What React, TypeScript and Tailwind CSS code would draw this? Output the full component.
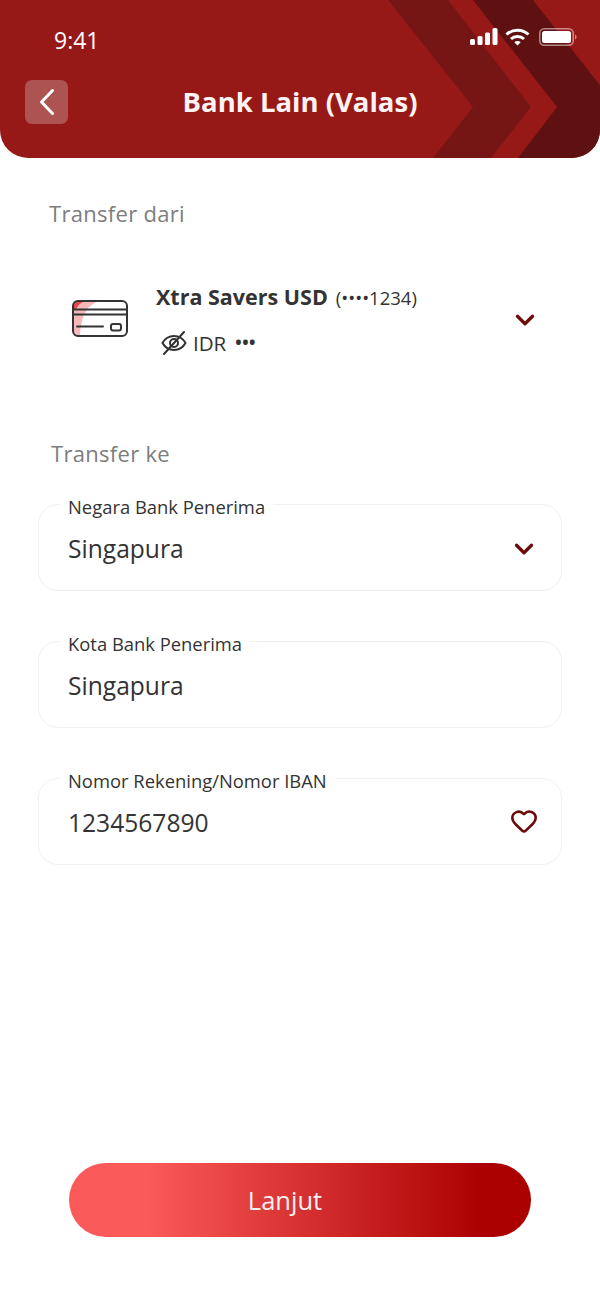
import React from 'react';
import { ChevronDown, Heart } from 'lucide-react';

const font = { fontFamily: '"Open Sans", sans-serif' };

const Chevrons = () => (
  <svg className="absolute inset-0" width="600" height="158" viewBox="0 0 600 158" fill="none">
    <path d="M388 0H448L531 107L491 158H433L473 107Z" fill="#761614" />
    <path d="M473 0H533L617 107L600 158H518L557 107Z" fill="#5e1110" />
  </svg>
);

const StatusIcons = () => (
  <div className="flex items-center">
    <svg width="28" height="18" viewBox="0 0 28 18" fill="white">
      <rect x="0" y="11" width="5" height="6" rx="1.5" />
      <rect x="7.5" y="8" width="5" height="9" rx="1.5" />
      <rect x="15" y="4.5" width="5" height="12.5" rx="1.5" />
      <rect x="22.5" y="0" width="5" height="17" rx="1.5" />
    </svg>
    <svg width="25" height="18" viewBox="0 0 25 18" fill="none" stroke="white" strokeWidth="3" className="ml-[7px]">
      <path d="M1.5 6.5C7.5 0.8 17.5 0.8 23.5 6.5" />
      <path d="M6 11C9.5 7.6 15.5 7.6 19 11" />
      <path d="M12.5 17.5L9.3 14.2C11 12.7 14 12.7 15.7 14.2Z" fill="white" stroke="none" />
    </svg>
    <svg width="38" height="20" viewBox="0 0 38 20" fill="none" className="ml-[9px]">
      <rect x="0.75" y="1.75" width="33.5" height="16.5" rx="4.5" stroke="white" strokeOpacity="0.5" strokeWidth="1.5" />
      <rect x="3" y="4" width="29" height="12" rx="2.5" fill="white" />
      <path d="M36 7.5C37 8 37.5 9 37.5 10C37.5 11 37 12 36 12.5Z" fill="white" fillOpacity="0.5" />
    </svg>
  </div>
);

const CardIcon = () => (
  <svg width="56" height="37" viewBox="0 0 56 37" fill="none">
    <path d="M2 8C2 3 3 1 8 1H28C15 4 9 16 8 36H6C3 36 2 35 2 32Z" fill="#f6b9b9" />
    <path d="M2 10V5C2 3 3 1 6 1H13C8 3 5 6 4 10Z" fill="#e8494c" />
    <rect x="1" y="1" width="54" height="35" rx="5" stroke="#333333" strokeWidth="2" />
    <path d="M1 9.5H55M1 14.5H55" stroke="#333333" strokeWidth="2" />
    <path d="M5 26.5H31" stroke="#333333" strokeWidth="2" strokeLinecap="round" />
    <rect x="39" y="24" width="10" height="6.5" rx="2" stroke="#333333" strokeWidth="2" />
  </svg>
);

const EyeOff = () => (
  <svg width="26" height="24" viewBox="0 0 26 24" fill="none" stroke="#333333" strokeWidth="2">
    <path d="M1.5 12C4 7.5 8 5 13 5C18 5 22 7.5 24.5 12C22 16.5 18 19 13 19C8 19 4 16.5 1.5 12Z" />
    <circle cx="13" cy="12" r="4" />
    <path d="M3 23L23 1" strokeLinecap="round" />
  </svg>
);

interface FieldProps {
  label: string;
  value: string;
  icon?: React.ReactNode;
}

const Field: React.FC<FieldProps> = ({ label, value, icon }) => (
  <div className="relative flex h-[87px] items-center justify-between rounded-[20px] border border-[#f1f1f1] pl-[29px] pr-[22px] pt-[3px]">
    <span className="absolute -top-[10px] left-[21px] bg-white px-2 text-[18.4px] leading-[24px] text-[#333333]">
      {label}
    </span>
    <span className="text-[24.6px] leading-[32px] text-[#333333]">{value}</span>
    {icon}
  </div>
);

export default function App() {
  return (
    <div className="flex h-[1300px] w-[600px] flex-col bg-white" style={font}>
      <header className="relative h-[158px] shrink-0 overflow-hidden rounded-b-[28px] bg-[#971917]">
        <Chevrons />
        <div className="relative flex h-[80px] items-start justify-between pl-[54px] pr-[23px] pt-[25px]">
          <span className="text-[23px] leading-[30px] text-white">9:41</span>
          <div className="pt-[2px]">
            <StatusIcons />
          </div>
        </div>
        <div className="relative flex h-[44px] items-center justify-center">
          <button className="absolute left-[25px] top-0 flex h-[44px] w-[43px] items-center justify-center rounded-[7px] bg-[#ad5352]">
            <svg width="16" height="26" viewBox="0 0 16 26" fill="none" stroke="white" strokeWidth="3" strokeLinecap="round" strokeLinejoin="round">
              <path d="M13.5 1.5L2.5 13L13.5 24.5" />
            </svg>
          </button>
          <h1 className="text-[27.5px] font-bold leading-[36px] text-[#fdf3f3]">Bank Lain (Valas)</h1>
        </div>
      </header>

      <main className="flex flex-1 flex-col">
        <h2 className="ml-[49px] mt-[40px] text-[22px] leading-[30px] tracking-[0.3px] text-[#7d7d7d]">Transfer dari</h2>

        <div className="mt-[54px] flex items-start pl-[72px] pr-[60px]">
          <div className="mt-[18px] shrink-0">
            <CardIcon />
          </div>
          <div className="ml-[28px] flex-1">
            <div className="flex items-baseline gap-[8px] leading-[30px]">
              <span className="text-[21.5px] font-bold text-[#333333]">Xtra Savers USD</span>
              <span className="text-[18.5px] text-[#333333]">(••••1234)</span>
            </div>
            <div className="ml-[5px] mt-[15px] flex items-center gap-[6px]">
              <EyeOff />
              <span className="text-[20.5px] leading-[30px] text-[#333333]">IDR</span>
              <span className="ml-[3px] text-[17px] font-bold leading-[30px] tracking-[0.5px] text-[#333333]">•••</span>
            </div>
          </div>
          <ChevronDown className="mt-[23px] shrink-0" size={30} color="#6d0b0b" strokeWidth={2.6} />
        </div>

        <h2 className="ml-[51px] mt-[80px] text-[22px] leading-[30px] tracking-[0.3px] text-[#7d7d7d]">Transfer ke</h2>

        <div className="mx-[38px] mt-[36px] flex flex-col gap-[50px]">
          <Field
            label="Negara Bank Penerima"
            value="Singapura"
            icon={<ChevronDown size={30} color="#6d0b0b" strokeWidth={2.6} />}
          />
          <Field label="Kota Bank Penerima" value="Singapura" />
          <Field
            label="Nomor Rekening/Nomor IBAN"
            value="1234567890"
            icon={<Heart size={28} color="#6d0b0b" strokeWidth={2.2} className="-mt-[5px] mr-[1px]" />}
          />
        </div>

        <div className="mt-auto flex justify-center pb-[63px]">
          <button className="h-[74px] w-[462px] rounded-full bg-linear-to-r/srgb from-[#fb5a5a] from-[17%] to-[#ab0000] to-[90%] text-[25.5px] text-[#fdf0f0]">
            <span className="mr-[30px]">Lanjut</span>
          </button>
        </div>
      </main>
    </div>
  );
}
